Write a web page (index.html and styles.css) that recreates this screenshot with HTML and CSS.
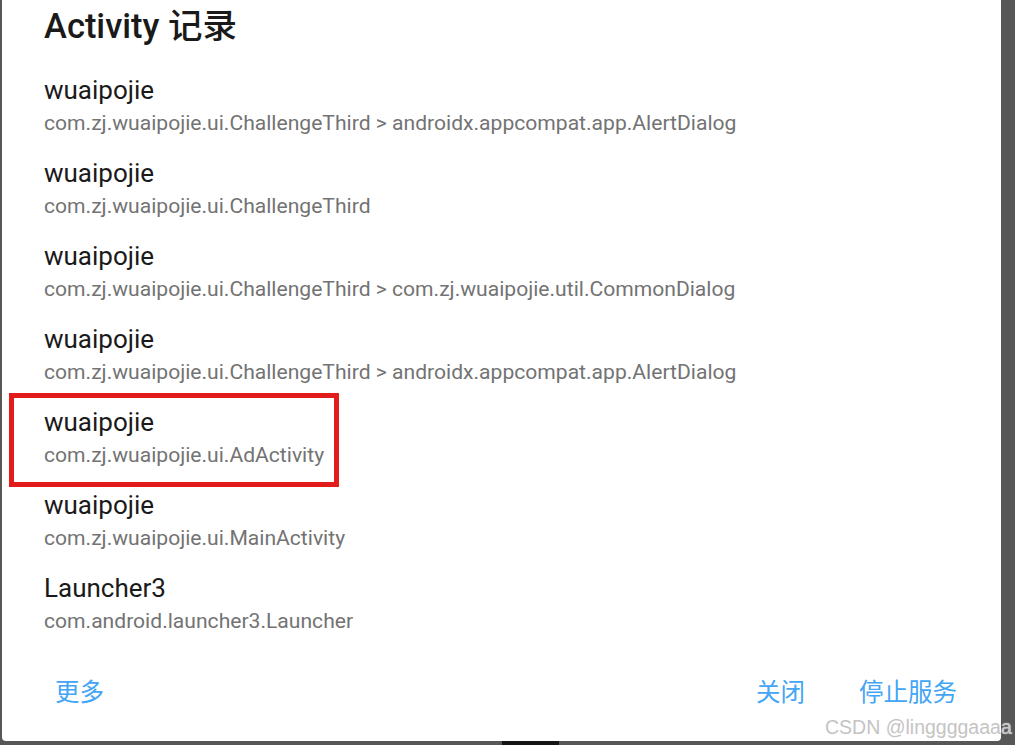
FILE: index.html
```html
<!DOCTYPE html>
<html lang="zh-CN">
<head>
<meta charset="utf-8">
<title>Activity 记录</title>
<link rel="stylesheet" href="styles.css">
</head>
<body>
<div class="screen">
  <div class="dialog">
    <div class="dialog-title">Activity 记录</div>
    <ul class="list">
      <li class="item"><div class="name">wuaipojie</div><div class="cls">com.zj.wuaipojie.ui.ChallengeThird &gt; androidx.appcompat.app.AlertDialog</div></li>
      <li class="item"><div class="name">wuaipojie</div><div class="cls">com.zj.wuaipojie.ui.ChallengeThird</div></li>
      <li class="item"><div class="name">wuaipojie</div><div class="cls">com.zj.wuaipojie.ui.ChallengeThird &gt; com.zj.wuaipojie.util.CommonDialog</div></li>
      <li class="item"><div class="name">wuaipojie</div><div class="cls">com.zj.wuaipojie.ui.ChallengeThird &gt; androidx.appcompat.app.AlertDialog</div></li>
      <li class="item"><div class="name">wuaipojie</div><div class="cls">com.zj.wuaipojie.ui.AdActivity</div></li>
      <li class="item"><div class="name">wuaipojie</div><div class="cls">com.zj.wuaipojie.ui.MainActivity</div></li>
      <li class="item"><div class="name">Launcher3</div><div class="cls">com.android.launcher3.Launcher</div></li>
    </ul>
    <div class="actions">
      <span class="btn">更多</span>
      <span class="spacer"></span>
      <span class="btn">关闭</span>
      <span class="btn btn-last">停止服务</span>
    </div>
  </div>
  <div class="nav-peek"></div>
  <div class="highlight"></div>
  <div class="watermark">CSDN @linggggaaaa</div>
</div>
</body>
</html>
```

FILE: styles.css
```css
html, body {
  margin: 0;
  padding: 0;
}
body {
  background: #575757;
  width: 1015px;
  height: 745px;
  overflow: hidden;
  font-family: Roboto, "Noto Sans CJK SC", sans-serif;
}
.screen {
  position: relative;
  width: 1015px;
  height: 745px;
}
.dialog {
  margin-left: 2px;
  width: 999px;
  height: 741px;
  background: #ffffff;
  border-radius: 0 0 4px 4px;
  display: flex;
  flex-direction: column;
}
.dialog-title {
  padding: 2px 0 0 42px;
  font-size: 34.5px;
  line-height: 48px;
  font-weight: 500;
  color: #1a1a1a;
}
.list {
  list-style: none;
  margin: 0;
  padding: 16px 0 0 0;
}
.item {
  height: 83px;
  padding: 8px 0 0 42px;
  box-sizing: border-box;
}
.name {
  font-size: 26px;
  line-height: 32px;
  color: #1a1a1a;
}
.cls {
  font-size: 21.1px;
  line-height: 34px;
  color: #737373;
}
.actions {
  margin-top: auto;
  display: flex;
  align-items: center;
  padding: 0 44px 32px 53px;
}
.btn {
  font-size: 24.5px;
  line-height: 36px;
  color: #42a5f5;
  font-family: "Noto Sans CJK SC", sans-serif;
}
.spacer {
  flex: 1;
}
.btn-last {
  margin-left: 54px;
}
.nav-peek {
  position: absolute;
  left: 502px;
  top: 741px;
  width: 57px;
  height: 4px;
  background: #151515;
}
.highlight {
  position: absolute;
  left: 9px;
  top: 393px;
  width: 330px;
  height: 94px;
  box-sizing: border-box;
  border: 5px solid #e21b1b;
}
.watermark {
  position: absolute;
  left: 825px;
  top: 714px;
  font-family: "Liberation Sans", Arial, sans-serif;
  font-size: 19.5px;
  line-height: 26px;
  color: #c4c4c4;
  text-shadow: 0 0 1px #ffffff;
}
```
